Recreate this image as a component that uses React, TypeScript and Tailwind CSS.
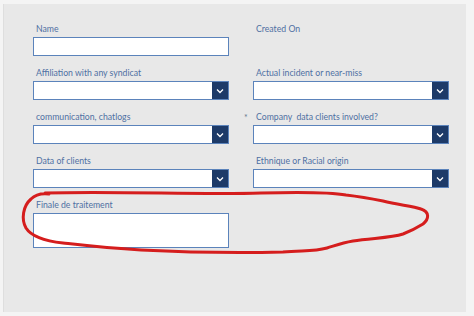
const FONT = "font-['Lato','Open_Sans',sans-serif]";

function Label({ text, required }: { text: string; required?: boolean }) {
  return (
    <div className={`relative h-[12px] pl-[3px] text-[8.7px] leading-[12px] text-[#4f70a3] whitespace-pre ${FONT}`}>
      {required && <span className="absolute left-[-9px] top-[1px] text-[#6a7a90]">*</span>}
      {text}
    </div>
  );
}

function TextBox({ tall }: { tall?: boolean }) {
  return <div className={(tall ? "h-[35px]" : "h-[19px]") + " bg-white border border-[#5b83bb]"} />;
}

function Dropdown() {
  return (
    <div className="h-[19px] flex bg-white border border-[#5b83bb]">
      <div className="flex-1" />
      <div className="w-[16px] bg-[#1d3a68] flex items-center justify-center">
        <svg width="8" height="6" viewBox="0 0 8 6" fill="none">
          <path d="M1 1.5 L4 4.5 L7 1.5" stroke="#ffffff" strokeWidth="1.3" />
        </svg>
      </div>
    </div>
  );
}

function Field({ label, kind, required }: { label: string; kind: "text" | "select" | "area" | "none"; required?: boolean }) {
  return (
    <div className="flex flex-col gap-[2px]">
      <Label text={label} required={required} />
      {kind === "text" && <TextBox />}
      {kind === "area" && <TextBox tall />}
      {kind === "select" && <Dropdown />}
      {kind === "none" && <div className="h-[19px]" />}
    </div>
  );
}

export default function App() {
  return (
    <div className="w-[474px] h-[316px] bg-[#f4f4f4] overflow-hidden">
      <div className="relative ml-[3px] mt-[4px] w-[463px] h-[308px] bg-[#e8e8e8] border-l border-[#dedede]">
        <div className="grid grid-cols-[196px_196px] gap-x-[24px] gap-y-[11px] pl-[29px] pt-[19px]">
          <Field label="Name" kind="text" />
          <Field label="Created On" kind="none" />
          <Field label="Affiliation with any syndicat" kind="select" />
          <Field label="Actual incident or near-miss" kind="select" />
          <Field label="communication, chatlogs" kind="select" />
          <Field label="Company  data clients involved?" kind="select" required />
          <Field label="Data of clients" kind="select" />
          <Field label="Ethnique or Racial origin" kind="select" />
          <Field label="Finale de traitement" kind="area" />
        </div>
        {/* red marker scribble around the last field */}
        <svg className="absolute left-[-3px] top-[-4px] pointer-events-none" width="474" height="316" viewBox="0 0 474 316">
          <path
            d="M44 193 C120 191 200 195 260 193 C300 192 334 193 345 195 C362 197 372 199 382 201 C398 205 412 206 420 209 C429 212 428 219 422 224 C414 229 410 231 402 234 C390 238 370 238 352 241 C340 243 333 246 326 248 C312 252 300 250 282 252 C240 253 180 252 140 250 C105 248 80 245 62 243 C44 241 30 236 25 228 C20 219 22 206 30 199 C35 194 40 193 48 194"
            fill="none"
            stroke="#d51d1d"
            strokeWidth="3"
            strokeLinecap="round"
            strokeLinejoin="round"
          />
        </svg>
      </div>
    </div>
  );
}
